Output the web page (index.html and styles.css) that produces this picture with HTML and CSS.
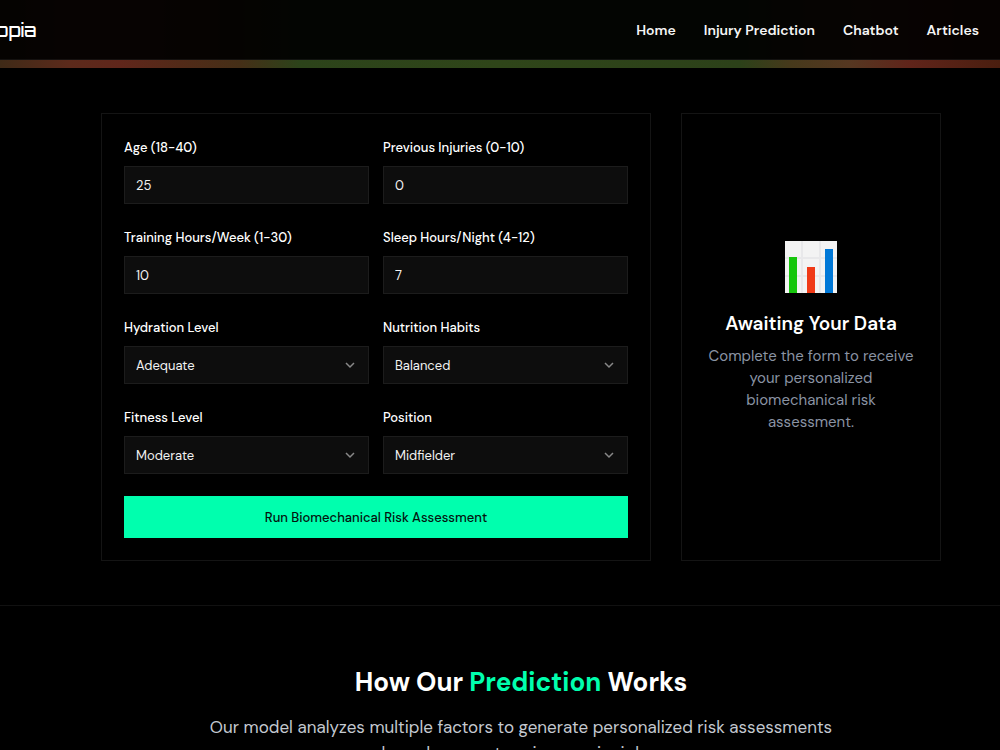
FILE: index.html
```
<!DOCTYPE html>
<html lang="en">
<head>
  <meta charset="UTF-8" />
  <meta name="viewport" content="width=device-width, initial-scale=1.0" />
  <title>Injury Prediction</title>
  <link rel="stylesheet" href="styles.css">
</head>
<body>
  <header class="hero">
    <nav class="navbar">
      <a class="logo" href="#">opia</a>
      <div class="nav-links">
        <a href="#">Home</a>
        <a href="#">Injury Prediction</a>
        <a href="#">Chatbot</a>
        <a href="#">Articles</a>
      </div>
    </nav>
  </header>

  <main>
    <section class="predict">
      <form class="card form-card">
        <div class="field">
          <label for="age">Age (18-40)</label>
          <input class="control" id="age" type="text" inputmode="numeric" value="25">
        </div>
        <div class="field">
          <label for="injuries">Previous Injuries (0-10)</label>
          <input class="control" id="injuries" type="text" inputmode="numeric" value="0">
        </div>
        <div class="field">
          <label for="training">Training Hours/Week (1-30)</label>
          <input class="control" id="training" type="text" inputmode="numeric" value="10">
        </div>
        <div class="field">
          <label for="sleep">Sleep Hours/Night (4-12)</label>
          <input class="control" id="sleep" type="text" inputmode="numeric" value="7">
        </div>
        <div class="field">
          <label for="hydration">Hydration Level</label>
          <div class="select-wrap">
            <select class="control" id="hydration"><option>Adequate</option></select>
            <svg class="chevron" viewBox="0 0 12 12"><path d="M2 4l4 4 4-4"/></svg>
          </div>
        </div>
        <div class="field">
          <label for="nutrition">Nutrition Habits</label>
          <div class="select-wrap">
            <select class="control" id="nutrition"><option>Balanced</option></select>
            <svg class="chevron" viewBox="0 0 12 12"><path d="M2 4l4 4 4-4"/></svg>
          </div>
        </div>
        <div class="field">
          <label for="fitness">Fitness Level</label>
          <div class="select-wrap">
            <select class="control" id="fitness"><option>Moderate</option></select>
            <svg class="chevron" viewBox="0 0 12 12"><path d="M2 4l4 4 4-4"/></svg>
          </div>
        </div>
        <div class="field">
          <label for="position">Position</label>
          <div class="select-wrap">
            <select class="control" id="position"><option>Midfielder</option></select>
            <svg class="chevron" viewBox="0 0 12 12"><path d="M2 4l4 4 4-4"/></svg>
          </div>
        </div>
        <button class="run-btn" type="button">Run Biomechanical Risk Assessment</button>
      </form>

      <aside class="card result-card">
        <svg class="chart-icon" viewBox="0 0 52 52">
          <rect width="52" height="52" fill="#f3f3f3"/>
          <path d="M17 0v52M35 0v52M0 17h52M0 35h52" stroke="#e8e8ea" stroke-width="2"/>
          <rect x="4" y="16" width="8" height="36" fill="#16c60c"/>
          <rect x="22" y="26" width="8" height="26" fill="#f03a17"/>
          <rect x="40" y="8" width="8" height="44" fill="#0078d7"/>
        </svg>
        <h3>Awaiting Your Data</h3>
        <p>Complete the form to receive your personalized biomechanical risk assessment.</p>
      </aside>
    </section>

    <section class="how">
      <h2>How Our <span class="accent">Prediction</span> Works</h2>
      <p>Our model analyzes multiple factors to generate personalized risk assessments based on sports science principles.</p>
    </section>
  </main>
</body>
</html>
```
FILE: styles.css
```
* {
  box-sizing: border-box;
}
html {
  overflow: hidden;
}
body {
  margin: 0;
  background: #000;
  color: #fff;
  font-family: "DM Sans", Inter, "Open Sans", sans-serif;
}
.hero {
  padding-bottom: 8px;
  background: linear-gradient(90deg, #3f2a17 0%, #5c2a1b 7%, #60261b 12%, #522a18 18%, #452f17 24%, #2c431a 30%, #2f4519 50%, #2c4119 74%, #46391b 79%, #553721 85%, #60241a 91%, #4a1e0f 100%);
}
.navbar {
  display: flex;
  align-items: center;
  justify-content: space-between;
  height: 60px;
  padding-right: 21px;
  background: rgba(0, 0, 0, 0.92);
  border-bottom: 1px solid rgba(255, 255, 255, 0.06);
}
.logo {
  margin-left: -4px;
  color: #fff;
  font-family: Orbitron, Oxanium, "DejaVu Sans", sans-serif;
  font-size: 18px;
  font-weight: 500;
  text-decoration: none;
}
.nav-links {
  display: flex;
  gap: 28px;
}
.nav-links a {
  color: #f5f5f5;
  font-size: 14px;
  font-weight: 600;
  line-height: 18px;
  text-decoration: none;
}
.predict {
  display: grid;
  grid-template-columns: minmax(0, 1fr) 260px;
  gap: 30px;
  padding: 45px 59px 44px 101px;
  border-bottom: 1px solid #111;
}
.card {
  padding: 22px;
  border: 1px solid #141414;
}
.form-card {
  display: grid;
  grid-template-columns: 1fr 1fr;
  gap: 22px 14px;
}
.field {
  display: flex;
  flex-direction: column;
  gap: 6px;
}
.field label {
  font-size: 13px;
  font-weight: 500;
  line-height: 24px;
}
.control {
  width: 100%;
  height: 38px;
  padding: 0 11px;
  border: 1px solid #1c1c1c;
  border-radius: 0;
  background: #0d0d0d;
  color: #f2f2f2;
  font: inherit;
  font-size: 13px;
  appearance: none;
}
.select-wrap {
  display: grid;
  align-items: center;
}
.select-wrap > * {
  grid-area: 1 / 1;
}
.chevron {
  width: 12px;
  height: 12px;
  margin-right: 13px;
  justify-self: end;
  fill: none;
  stroke: #888;
  stroke-width: 1.5;
  pointer-events: none;
}
.run-btn {
  grid-column: 1 / -1;
  height: 42px;
  border: none;
  background: #00ffae;
  color: #04140e;
  font: inherit;
  font-size: 13px;
  font-weight: 500;
}
.result-card {
  display: flex;
  flex-direction: column;
  align-items: center;
  justify-content: center;
  text-align: center;
}
.chart-icon {
  width: 52px;
  height: 52px;
}
.result-card h3 {
  margin: 19px 0 9px;
  font-size: 19px;
  font-weight: 600;
  line-height: 24px;
}
.result-card p {
  margin: 0;
  color: #8a93a3;
  font-size: 15px;
  line-height: 22px;
}
.how {
  padding: 58px 59px 0 101px;
  text-align: center;
}
.how h2 {
  margin: 0 0 14px;
  font-size: 26px;
  font-weight: 700;
  line-height: 36px;
}
.accent {
  color: #00ffae;
}
.how p {
  max-width: 640px;
  margin: 0 auto;
  color: #c4c9d0;
  font-size: 17px;
  line-height: 26px;
}
```
